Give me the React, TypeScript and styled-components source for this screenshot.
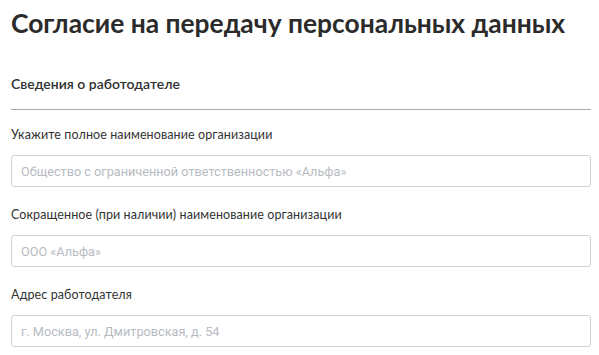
import React from 'react';
import styled, { createGlobalStyle } from 'styled-components';

const GlobalStyle = createGlobalStyle`
  body {
    margin: 0;
    background: #ffffff;
    font-family: Lato, "Liberation Sans", Arial, sans-serif;
  }
`;

interface Field {
  label: string;
  placeholder: string;
}

const fields: Field[] = [
  {
    label: 'Укажите полное наименование организации',
    placeholder: 'Общество с ограниченной ответственностью «Альфа»',
  },
  {
    label: 'Сокращенное (при наличии) наименование организации',
    placeholder: 'ООО «Альфа»',
  },
  {
    label: 'Адрес работодателя',
    placeholder: 'г. Москва, ул. Дмитровская, д. 54',
  },
];

const Page = styled.div`
  width: 580px;
  padding: 8px 0 0 11px;
`;

const Title = styled.h1`
  margin: 0;
  font-family: Lato, "Liberation Sans", sans-serif;
  font-weight: 700;
  font-size: 26.4px;
  line-height: 30px;
  color: #2b2b2b;
  white-space: nowrap;
`;

const SectionTitle = styled.h2`
  margin: 36px 0 0;
  font-size: 14px;
  font-weight: 600;
  line-height: 20px;
  color: #2f2f2f;
  padding-bottom: 15px;
  border-bottom: 1px solid #a8a8a8;
`;

const Form = styled.div`
  display: flex;
  flex-direction: column;
  gap: 20px;
  padding-top: 17px;
`;

const Group = styled.label`
  display: flex;
  flex-direction: column;
  gap: 12px;
`;

const Label = styled.span`
  font-size: 12.5px;
  letter-spacing: 0.1px;
  line-height: 16px;
  color: #333333;
`;

const Input = styled.input`
  box-sizing: border-box;
  width: 100%;
  height: 32px;
  padding: 0 9px;
  border: 1px solid #cfd2d6;
  border-radius: 3px;
  font-family: Roboto, "Liberation Sans", sans-serif;
  font-size: 12.7px;
  color: #333;
  outline: none;

  &::placeholder {
    color: #b7bbc2;
  }
`;

const App: React.FC = () => {
  return (
    <Page>
      <GlobalStyle />
      <Title>Согласие на передачу персональных данных</Title>
      <SectionTitle>Сведения о работодателе</SectionTitle>
      <Form>
        {fields.map((f) => (
          <Group key={f.label}>
            <Label>{f.label}</Label>
            <Input placeholder={f.placeholder} />
          </Group>
        ))}
      </Form>
    </Page>
  );
};

export default App;
